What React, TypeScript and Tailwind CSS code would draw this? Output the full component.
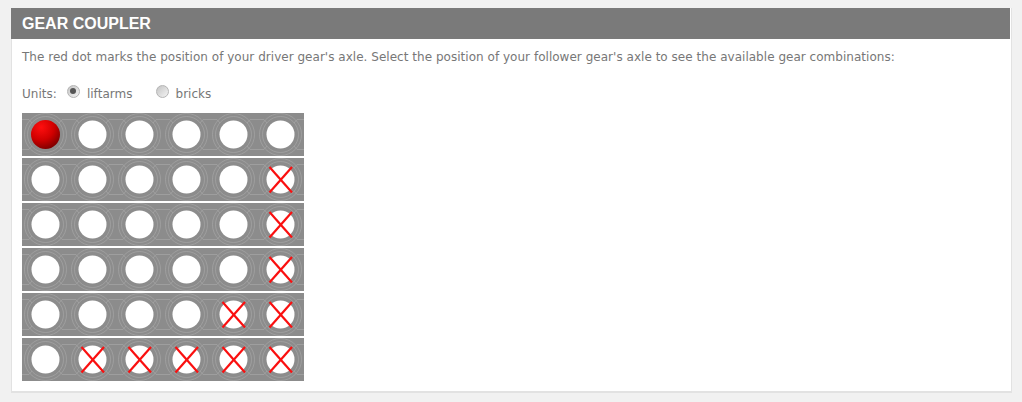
const rows: number[] = [0, 1, 1, 1, 2, 5];

function Radio({ checked }: { checked?: boolean }) {
  return (
    <span className="flex h-[13px] w-[13px] items-center justify-center rounded-full border border-[#b4b4b4] bg-gradient-to-br from-[#c4c4c4] to-[#f4f4f4]">
      {checked ? <span className="h-[6px] w-[6px] rounded-full bg-[#555]" /> : null}
    </span>
  );
}

function Cell({ red, cross }: { red?: boolean; cross?: boolean }) {
  return (
    <svg width="47" height="43" viewBox="0 0 47 43" className="block shrink-0">
      <g fill="none" stroke="#a6a6a6" strokeWidth="0.7">
        <path d="M0 6.5H7L10 10" />
        <path d="M47 6.5H40L37 10" />
        <path d="M0 36.5H7L10 33" />
        <path d="M47 36.5H40L37 33" />
        <circle cx="23.5" cy="21.5" r="18" />
        <circle cx="23.5" cy="21.5" r="21" />
      </g>
      <circle cx="23.5" cy="21.5" r={red ? 14.5 : 14} fill={red ? "url(#ball)" : "#fff"} />
      {cross ? (
        <g stroke="#fa0f0f" strokeWidth="2.2">
          <path d="M12.5 9L35 34.5" />
          <path d="M35 9L12.5 34.5" />
        </g>
      ) : null}
    </svg>
  );
}

export default function App() {
  return (
    <div className="h-[402px] w-[1022px] overflow-hidden bg-[#f1f1f1] pl-[11px] pt-[8px] font-['DejaVu_Sans',sans-serif] text-[12px] text-[#777]">
      <svg width="0" height="0" className="absolute">
        <defs>
          <radialGradient id="ball" cx="35%" cy="25%" r="80%">
            <stop offset="0%" stopColor="#ff0f0f" />
            <stop offset="55%" stopColor="#d00000" />
            <stop offset="100%" stopColor="#7a0000" />
          </radialGradient>
        </defs>
      </svg>
      <div className="h-[385px] w-[1001px] border-r border-b-2 border-l border-[#e2e2e2] bg-white">
        <h2 className="mr-px -ml-px h-[31px] bg-[#7a7a7a] pl-[11px] font-['Liberation_Sans',sans-serif] text-[16px] leading-[31px] font-bold text-white">
          GEAR COUPLER
        </h2>
        <p className="mt-[10px] pl-[10px] leading-[16px] tracking-[0.027px]">
          The red dot marks the position of your driver gear's axle. Select the position of your follower gear's axle to see the available gear combinations:
        </p>
        <div className="mt-[21px] flex h-[16px] items-center pl-[10px] leading-[16px] tracking-[0.027px]">
          <span>Units:</span>
          <span className="mb-[6px] ml-[10px]"><Radio checked /></span>
          <span className="ml-[7px]">liftarms</span>
          <span className="mb-[6px] ml-[23px]"><Radio /></span>
          <span className="ml-[7px]">bricks</span>
        </div>
        <div className="mt-[11px] ml-[10px] flex w-[282px] flex-col gap-[2px]">
          {rows.map((crossed, r) => (
            <div key={r} className="flex h-[43px] bg-[#8c8c8c]">
              {[0, 1, 2, 3, 4, 5].map((c) => (
                <Cell key={c} red={r === 0 && c === 0} cross={c >= 6 - crossed} />
              ))}
            </div>
          ))}
        </div>
      </div>
    </div>
  );
}
